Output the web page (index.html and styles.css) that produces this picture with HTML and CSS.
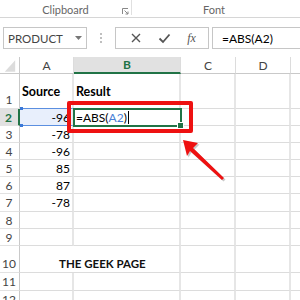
FILE: index.html
```html
<!DOCTYPE html>
<html>
<head>
<meta charset="utf-8">
<link rel="stylesheet" href="styles.css">
</head>
<body>
<div class="ribbon">
  <div class="group clip">Clipboard
    <svg class="launcher" width="7" height="7" viewBox="0 0 7 7"><path d="M0.5 6V0.5H6" fill="none" stroke="#888" stroke-width="1"/><path d="M2.5 2.5L6 6M6 3.5V6H3.5" fill="none" stroke="#888" stroke-width="1"/></svg>
  </div>
  <div class="group font">Font</div>
</div>

<div class="fbar">
  <div class="namebox"><span>PRODUCT</span>
    <svg class="dd" width="7" height="4" viewBox="0 0 7 4"><path d="M0 0H7L3.5 4Z" fill="#777"/></svg>
  </div>
  <div class="dots"><i></i><i></i><i></i></div>
  <div class="btns">
    <svg width="12" height="12" viewBox="0 0 12 12"><path d="M2 2L10 10M10 2L2 10" stroke="#555" stroke-width="1.4" fill="none"/></svg>
    <svg width="13" height="12" viewBox="0 0 13 12"><path d="M1.5 6.5L5 10L11.5 2.5" stroke="#555" stroke-width="1.8" fill="none"/></svg>
    <span class="fx">fx</span>
  </div>
  <div class="finput">=ABS(A2)</div>
</div>

<div class="sheet">
  <div class="c hd corner"><svg width="20" height="17" viewBox="0 0 20 17"><path d="M5 15H16V3Z" fill="#dcdcdc"/></svg></div>
  <div class="c hd">A</div>
  <div class="c hd selcol">B</div>
  <div class="c hd">C</div>
  <div class="c hd">D</div>
  <div class="c hd last"></div>

  <div class="c rh bottom">1</div>
  <div class="c title">Source</div>
  <div class="c title">Result</div>
  <div class="c"></div><div class="c"></div><div class="c last"></div>

  <div class="c rh selrow">2</div>
  <div class="c num ref">-96</div>
  <div class="c edit"><span>=ABS(</span><span class="blue">A2</span><span>)</span><b class="caret"></b></div>
  <div class="c"></div><div class="c"></div><div class="c last"></div>

  <div class="c rh">3</div>
  <div class="c num">-78</div>
  <div class="c"></div><div class="c"></div><div class="c"></div><div class="c last"></div>

  <div class="c rh">4</div>
  <div class="c num">-96</div>
  <div class="c"></div><div class="c"></div><div class="c"></div><div class="c last"></div>

  <div class="c rh">5</div>
  <div class="c num">85</div>
  <div class="c"></div><div class="c"></div><div class="c"></div><div class="c last"></div>

  <div class="c rh">6</div>
  <div class="c num">87</div>
  <div class="c"></div><div class="c"></div><div class="c"></div><div class="c last"></div>

  <div class="c rh">7</div>
  <div class="c num">-78</div>
  <div class="c"></div><div class="c"></div><div class="c"></div><div class="c last"></div>

  <div class="c rh">8</div>
  <div class="c"></div><div class="c"></div><div class="c"></div><div class="c"></div><div class="c last"></div>

  <div class="c rh">9</div>
  <div class="c"></div><div class="c"></div><div class="c"></div><div class="c"></div><div class="c last"></div>

  <div class="c rh bottom">10</div>
  <div class="c span2 geek">THE GEEK PAGE</div>
  <div class="c"></div><div class="c"></div><div class="c last"></div>

  <div class="c rh">11</div>
  <div class="c"></div><div class="c"></div><div class="c"></div><div class="c"></div><div class="c last"></div>

  <div class="c rh">12</div>
  <div class="c"></div><div class="c"></div><div class="c"></div><div class="c"></div><div class="c last"></div>
</div>

<div class="redbox"></div>
<svg class="arrow" width="300" height="300" viewBox="0 0 300 300">
  <polygon points="184.5,141.5 199.5,144.5 194.5,149.5 225.5,179.5 223.5,181.5 191.5,152.5 188.5,157.5" fill="#888" opacity="0.45"/>
  <polygon points="183,140 198,143 193,148 224,178 222,180 190,151 187,156" fill="#ee1111"/>
</svg>
</body>
</html>
```

FILE: styles.css
```css
* { box-sizing: border-box; }
body {
  margin: 0;
  width: 300px;
  height: 300px;
  overflow: hidden;
  position: relative;
  background: #fff;
  font-family: Lato, "Liberation Sans", sans-serif;
  color: #000;
}
.ribbon {
  display: flex;
  height: 18px;
  border-bottom: 1px solid #d6d6d6;
  font-size: 11px;
  color: #666;
}
.group {
  display: flex;
  justify-content: center;
  align-items: center;
  height: 15px;
  padding-top: 4px;
}
.clip {
  width: 132px;
  border-right: 1px solid #e0e0e0;
  position: relative;
}
.launcher {
  position: absolute;
  left: 122px;
  top: 8px;
}
.font {
  flex: 1;
  padding-right: 4px;
}
.fbar {
  display: flex;
  align-items: center;
  height: 22px;
  margin-top: 9px;
  padding-left: 3px;
}
.namebox {
  width: 84px;
  height: 22px;
  border: 1px solid #c6c6c6;
  display: flex;
  align-items: center;
  justify-content: space-between;
  padding: 0 4px 0 4px;
  font-size: 11.5px;
  color: #444;
}
.dots {
  width: 28px;
  display: flex;
  flex-direction: column;
  align-items: center;
  gap: 2px;
}
.dots i {
  width: 2px;
  height: 2px;
  background: #aaa;
  border-radius: 1px;
}
.btns {
  width: 94px;
  height: 22px;
  border: 1px solid #c6c6c6;
  display: flex;
  align-items: center;
  justify-content: space-around;
  padding: 0 4px 0 6px;
}
.fx {
  font-family: "Liberation Serif", serif;
  font-style: italic;
  font-size: 12px;
  color: #555;
}
.finput {
  flex: 1;
  height: 22px;
  margin-left: 3px;
  border: 1px solid #c6c6c6;
  border-right: none;
  font-size: 12px;
  display: flex;
  align-items: center;
  padding-left: 9px;
}
.sheet {
  margin-top: 8px;
  display: grid;
  grid-template-columns: 20px 54px 107px 55px 55px 9px;
  grid-template-rows: 17px 35px 17px 17px 17px 17px 17px 18px 17px 17px 27px 18px 17px;
  font-size: 12px;
}
.c {
  border-right: 2px solid #e6e6e6;
  border-bottom: 1px solid #dcdcdc;
  display: flex;
  align-items: center;
  position: relative;
  white-space: nowrap;
}
.c.last { border-right: none; }
.hd {
  justify-content: center;
  color: #444;
  border-right: 1px solid #dcdcdc;
  border-bottom: 1px solid #c9c9c9;
}
.corner { border-right: 1px solid #c9c9c9; }
.selcol {
  background: #e1e1e1;
  color: #217346;
  font-weight: bold;
  border-bottom: 2px solid #217346;
}
.rh {
  justify-content: center;
  color: #444;
  border-right: 1px solid #c9c9c9;
  border-bottom: 1px solid #e2e2e2;
  padding-right: 1px;
}
.rh.bottom { align-items: flex-end; padding-bottom: 1px; }
.selrow {
  background: #e1e1e1;
  color: #217346;
  font-weight: bold;
  border-right: 2px solid #217346;
}
.title {
  font-weight: bold;
  align-items: flex-start;
  padding: 10px 0 0 2px;
  font-size: 12.5px;
}
.num {
  justify-content: flex-end;
  padding-right: 2px;
}
.ref {
  background: #e8effc;
  border-top: 1px solid #5b8fe0;
  border-bottom: 1px solid #5b8fe0;
  margin-top: -1px;
}
.ref::before, .ref::after {
  content: "";
  position: absolute;
  width: 3px;
  height: 3px;
  background: #3a78d8;
  left: 0;
}
.ref::before { top: -2px; }
.ref::after { bottom: -2px; }
.edit {
  z-index: 1;
  padding-left: 2px;
  border: none;
  box-shadow: 0 0 0 1px #217346, inset 0 0 0 1px #217346;
}
.edit::after {
  content: "";
  position: absolute;
  right: -3px;
  bottom: -3px;
  width: 5px;
  height: 5px;
  background: #217346;
  border: 1px solid #fff;
}
.blue { color: #4a7fd6; }
.caret {
  width: 1px;
  height: 13px;
  background: #000;
  margin-left: 1px;
}
.span2 { grid-column: span 2; }
.geek {
  font-weight: bold;
  font-size: 11.5px;
  align-items: flex-end;
  padding: 0 0 2px 39px;
  color: #111;
}
.redbox {
  position: absolute;
  left: 67px;
  top: 101px;
  width: 126px;
  height: 32px;
  border: 4px solid #ee1111;
  border-radius: 2px;
  z-index: 2;
}
.arrow {
  position: absolute;
  left: 0;
  top: 0;
  z-index: 3;
  pointer-events: none;
}
```
